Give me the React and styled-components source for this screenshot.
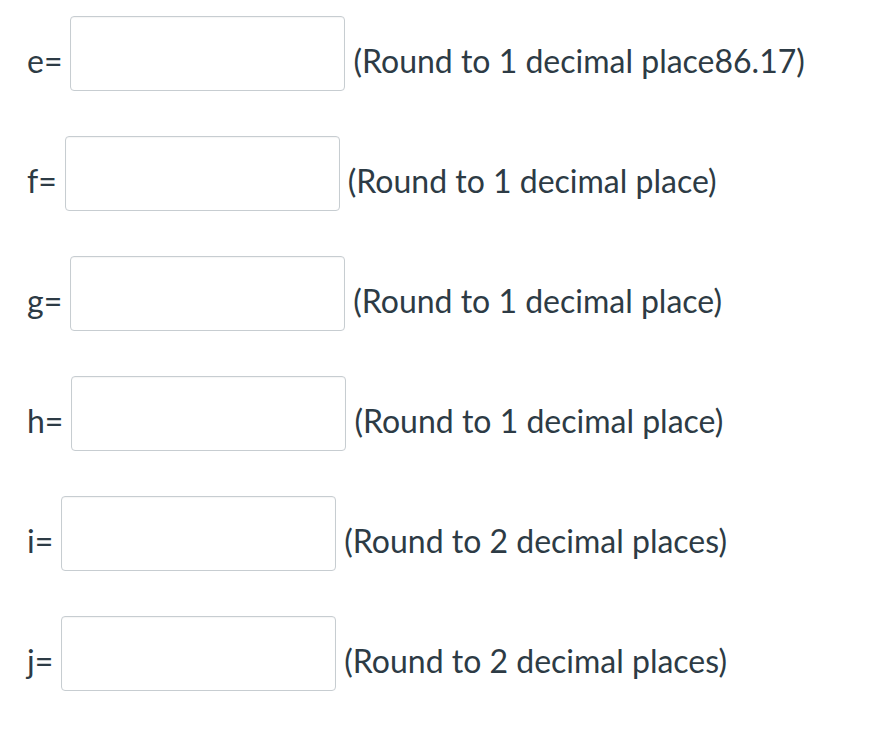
import React from "react";
import styled, { createGlobalStyle } from "styled-components";

const GlobalStyle = createGlobalStyle`
  body {
    margin: 0;
    background: #fff;
    font-family: Lato, "Open Sans", sans-serif;
    color: #2d3b45;
  }
`;

const Page = styled.div`
  display: flex;
  flex-direction: column;
  gap: 45px;
  padding: 16px 0 0 27px;
`;

const Row = styled.div`
  display: flex;
  align-items: flex-end;
`;

const Label = styled.span`
  font-size: 32px;
  padding-bottom: 11px;
  margin-right: 8px;
`;

const Box = styled.input`
  box-sizing: border-box;
  width: 275px;
  height: 75px;
  border: 1px solid #c7cdd1;
  border-radius: 4px;
  background: #fff;
  box-shadow: inset 0 1px 1px rgba(0, 0, 0, 0.04);
  margin: 0;
  outline: none;
`;

const Hint = styled.span`
  font-size: 32px;
  padding-bottom: 11px;
  margin-left: 8px;
`;

const rows = [
  ["e=", "(Round to 1 decimal place86.17)"],
  ["f=", "(Round to 1 decimal place)"],
  ["g=", "(Round to 1 decimal place)"],
  ["h=", "(Round to 1 decimal place)"],
  ["i=", "(Round to 2 decimal places)"],
  ["j=", "(Round to 2 decimal places)"]
];

const App = () => {
  return (
    <>
      <GlobalStyle />
      <Page>
        {rows.map(([label, hint]) => (
          <Row key={label}>
            <Label>{label}</Label>
            <Box type="text" />
            <Hint>{hint}</Hint>
          </Row>
        ))}
      </Page>
    </>
  );
};

export default App;
